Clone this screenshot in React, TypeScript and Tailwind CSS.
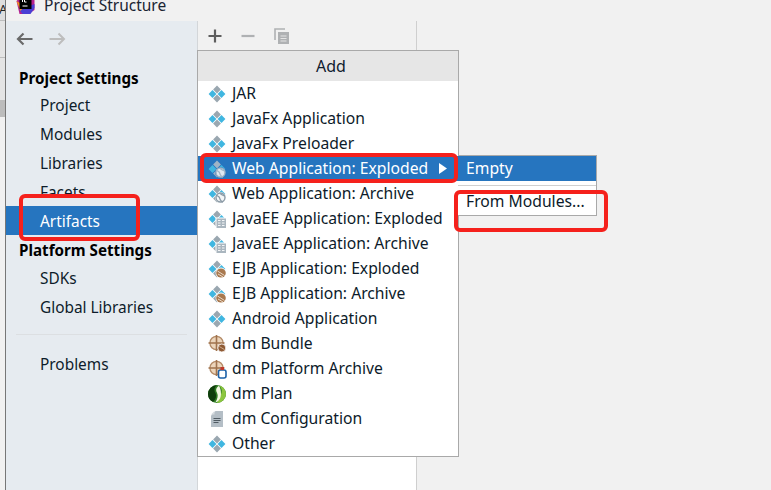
import React from "react";

const font = { fontFamily: '"Noto Sans", sans-serif' };

function Cluster({ tl = "#9aa7b0", l = "#40b6e0", r = "#40b6e0", b = "#9aa7b0" }) {
  return (
    <>
      <path d="M9 .6l3.9 3.9L9 8.4 5.1 4.5z" fill={tl} />
      <path d="M4.5 5.1L8.4 9l-3.9 3.9L.6 9z" fill={l} />
      <path d="M13.5 5.1L17.4 9l-3.9 3.9L9.6 9z" fill={r} />
      <path d="M9 9.6l3.9 3.9L9 17.4l-3.9-3.9z" fill={b} />
    </>
  );
}

function Globe({ light }: { light?: boolean }) {
  const c = light ? "#9fb4c6" : "#8b9aa6";
  return (
    <>
      <circle cx="12.5" cy="12.5" r="5.4" fill={light ? "#2675bf" : "#fff"} />
      <circle cx="12.5" cy="12.5" r="4.5" fill={light ? "#dfe8f0" : "#f4f6f7"} stroke={c} strokeWidth="1.4" />
      <path d="M9 10.5c2 1 3 2 3 3.5s2 2 2.5 3.5M12 8.5c1 1.5 3 1 4.5 2.5" fill="none" stroke={c} strokeWidth="1.3" />
    </>
  );
}

function EE() {
  return (
    <>
      <rect x="7.5" y="7.5" width="11" height="11" fill="#fff" />
      <rect x="8.5" y="8.5" width="9.5" height="9.5" fill="#aab6bf" />
      <path d="M10 10.5h2.5M10 13h2.5M10 15.5h2.5M14 10.5h2.5M14 13h2.5M14 15.5h2.5" stroke="#f4f6f7" strokeWidth="1" />
    </>
  );
}

function Bean() {
  return (
    <>
      <circle cx="13" cy="13" r="5.4" fill="#fff" />
      <ellipse cx="13" cy="13" rx="4.8" ry="4.5" fill="#a9794f" />
      <path d="M9.5 11l7 4.5M10 14l5 3" stroke="#e9d9c8" strokeWidth="1" />
    </>
  );
}

function Target() {
  return (
    <>
      <circle cx="8.5" cy="8" r="6.6" fill="#ecd5bb" stroke="#b38a66" strokeWidth="1.3" />
      <path d="M8.5 0v16M.5 8h16" stroke="#a0734e" strokeWidth="1.6" />
    </>
  );
}

function ItemIcon({ kind }: { kind: string }) {
  let body: React.ReactNode;
  if (kind === "plain") body = <Cluster />;
  if (kind === "webSel")
    body = (
      <>
        <Cluster tl="#9fb4c6" b="#9fb4c6" />
        <Globe light />
      </>
    );
  if (kind === "web")
    body = (
      <>
        <Cluster />
        <Globe />
      </>
    );
  if (kind === "ee")
    body = (
      <>
        <Cluster />
        <EE />
      </>
    );
  if (kind === "ejb")
    body = (
      <>
        <Cluster />
        <Bean />
      </>
    );
  if (kind === "bundle")
    body = (
      <>
        <Target />
        <circle cx="13.8" cy="13" r="4" fill="#8f5a34" stroke="#fff" strokeWidth="0.8" />
        <path d="M11.3 11.5l5 3" stroke="#d8b898" strokeWidth="0.9" />
      </>
    );
  if (kind === "platform")
    body = (
      <>
        <Target />
        <rect x="10.5" y="10" width="7.5" height="8" rx="2" fill="#fff" stroke="#1d62a8" strokeWidth="1.6" />
        <rect x="12.5" y="7" width="3.5" height="3" fill="#c0392b" />
      </>
    );
  if (kind === "plan")
    body = (
      <>
        <circle cx="9" cy="9" r="9" fill="#2f7d23" />
        <path d="M0 9A9 9 0 0 1 9 0C6 3 6 5 7.5 8S8 14 5 17A9 9 0 0 1 0 9z" fill="#0f3d0c" />
        <path d="M18 9A9 9 0 0 0 11 .3c2 2 3.5 4.7 2.5 7.7s-3 5.5-4.5 10A9 9 0 0 0 18 9z" fill="#8cc63f" />
        <path d="M11 .8c-3 2-3.5 4-2 7s.5 6-1.5 9.5c3-.5 5.5-4 5.5-8.3s-1-6.200-2-8.200z" fill="#f2f7e2" />
      </>
    );
  if (kind === "config")
    body = (
      <>
        <path d="M7.500 1h7.500v16H3V5.500z" fill="#b4bec6" />
        <path d="M3 4.500L6.500 1v3.500z" fill="#d6dce0" />
        <path d="M5.500 8.500h7M5.500 10.500h7M5.500 12.500h5" stroke="#4f5a62" strokeWidth="1" />
      </>
    );
  return (
    <svg width="18" height="18" viewBox="0 0 18 18" className="shrink-0 overflow-visible">
      {body}
    </svg>
  );
}

const items: [string, string][] = [
  ["plain", "JAR"],
  ["plain", "JavaFx Application"],
  ["plain", "JavaFx Preloader"],
  ["webSel", "Web Application: Exploded"],
  ["web", "Web Application: Archive"],
  ["ee", "JavaEE Application: Exploded"],
  ["ee", "JavaEE Application: Archive"],
  ["ejb", "EJB Application: Exploded"],
  ["ejb", "EJB Application: Archive"],
  ["plain", "Android Application"],
  ["bundle", "dm Bundle"],
  ["platform", "dm Platform Archive"],
  ["plan", "dm Plan"],
  ["config", "dm Configuration"],
  ["plain", "Other"],
];

function NavItem({ label, active, shift }: { label: string; active?: boolean; shift?: boolean }) {
  return (
    <div className={`h-[29px] flex items-center pl-[34px] text-[15.4px] ${shift ? "pt-[2px]" : ""} ${active ? "bg-[#2675bf] text-white" : "text-[#0d1b2a]"}`}>{label}</div>
  );
}

export default function App() {
  return (
    <div className="relative w-[771px] h-[490px] overflow-hidden flex bg-[#f1f1f1] text-[15px]" style={font}>
      <div className="w-[6px] shrink-0 bg-[#f1f1f1] border-r border-[#777777] flex flex-col overflow-hidden text-[#222]">
        <div className="h-[20px] bg-[#dedede] text-[13px] leading-[18px] -ml-[1px]">A</div>
        <div className="h-[37px] bg-[#e4e4e4] border-t border-[#bdbdbd]" />
        <div className="h-[43px] bg-[#e4e4e4] border-t border-[#bdbdbd]" />
        <div className="h-[17px] bg-[#bcbcbc]" />
        <div className="flex-1 bg-[#f1f1f1]" />
      </div>
      <div className="flex-1 flex flex-col">
        <div className="h-[21px] shrink-0 flex items-start pl-[10px] overflow-hidden">
          <svg width="19" height="18" viewBox="0 0 18 18" className="shrink-0 -mt-[4px]">
            <path d="M0 5L5 0h13v14l-6 4H3z" fill="#b5218e" />
            <path d="M3 14l3 4h8l4-6v-4z" fill="#4a3fd4" />
            <path d="M0 5l4 10 4-5z" fill="#f7931e" />
            <rect x="3" y="0" width="12" height="13" fill="#000" />
            <path d="M6 2v4M8 2v4h2M6 10h5" stroke="#fff" strokeWidth="1" fill="none" />
          </svg>
          <span className="ml-[9px] text-[15.5px] leading-[20px] -mt-[5px] text-[#1a2433]">Project Structure</span>
        </div>
        <div className="flex-1 flex min-h-0">
          <div className="w-[192px] shrink-0 bg-[#e6ebf0] border-r border-[#d3d6d9] flex flex-col">
            <div className="h-[43px] flex items-center pl-[10px] pb-[8px] gap-[16px] shrink-0">
              <svg width="17" height="14" viewBox="0 0 17 14">
                <path d="M16.500 7H2M7.500 1.500L2 7l5.500 5.500" fill="none" stroke="#6a6a6a" strokeWidth="2.200" />
              </svg>
              <svg width="17" height="14" viewBox="0 0 17 14">
                <path d="M.5 7H15M9.500 1.500L15 7l-5.500 5.500" fill="none" stroke="#bdbdbd" strokeWidth="2" />
              </svg>
            </div>
            <div className="h-[26px] flex items-center pl-[13px] pt-[2px] font-bold text-[15.2px] text-black">Project Settings</div>
            <NavItem label="Project" shift />
            <NavItem label="Modules" shift />
            <NavItem label="Libraries" shift />
            <NavItem label="Facets" shift />
            <NavItem label="Artifacts" active shift />
            <div className="h-[28px] flex items-center pl-[13px] pt-[2px] font-bold text-[15.2px] text-black">Platform Settings</div>
            <NavItem label="SDKs" shift />
            <NavItem label="Global Libraries" shift />
            <div className="mx-[10px] mt-[13px] mb-[14px] h-px bg-[#dcdfe2]" />
            <NavItem label="Problems" shift />
          </div>
          <div className="flex-1 flex flex-col min-w-0">
            <div className="h-[29px] shrink-0 flex">
              <div className="w-[219px] shrink-0 border-r border-[#cfcfcf] flex items-center pl-[10px] gap-[19px]">
                <svg width="14" height="14" viewBox="0 0 14 14">
                  <path d="M7 .5v13M.5 7h13" stroke="#5e5e5e" strokeWidth="2.200" />
                </svg>
                <svg width="14" height="14" viewBox="0 0 14 14">
                  <path d="M.5 7h13" stroke="#afb1b3" strokeWidth="2.200" />
                </svg>
                <svg width="16" height="16" viewBox="0 0 16 16">
                  <path d="M1 12V1h10" fill="none" stroke="#afb1b3" strokeWidth="1.600" />
                  <rect x="4" y="4" width="11" height="12" fill="#afb1b3" />
                  <path d="M6.500 8h6M6.500 10.500h6M6.500 13h6" stroke="#e4e4e4" strokeWidth="1" />
                </svg>
              </div>
            </div>
            <div className="flex-1 flex">
              <div className="w-[219px] shrink-0 bg-white border-r border-[#cfcfcf]" />
            </div>
          </div>
        </div>
      </div>

      {/* popup */}
      <div className="absolute left-[197px] top-[50px] w-[262px] h-[407px] bg-white border border-[#a9a9a9]">
        <div className="h-[30px] bg-[#e6e6e6] flex items-center justify-center pl-[6px] text-[16px] text-[#10202f]">Add</div>
        {items.map(([k, label], i) => (
          <div key={label} className={`h-[25px] flex items-center pl-[10px] gap-[6px] text-[15.7px] ${i === 3 ? "bg-[#2675bf] text-white" : "text-[#0d1b2a]"}`}>
            <ItemIcon kind={k} />
            <span className="flex-1 whitespace-nowrap">{label}</span>
            {i === 3 && (
              <svg width="9" height="11" viewBox="0 0 9 11" className="mr-[11px]">
                <path d="M1 0l8 5.500L1 11z" fill="#fff" />
              </svg>
            )}
          </div>
        ))}
      </div>

      {/* submenu */}
      <div className="absolute left-[458px] top-[155px] w-[139px] h-[61px] bg-white border border-[#a9a9a9] border-l-0 text-[#0d1b2a] text-[15.7px]">
        <div className="h-[25px] bg-[#2675bf] text-white flex items-center pl-[8px]">Empty</div>
        <div className="h-[4px]" />
        <div className="h-px bg-[#d0d0d0]" />
        <div className="h-[29px] flex items-center pl-[8px] pt-[3px]">From Modules...</div>
      </div>

      {/* annotations */}
      <div className="absolute left-[19px] top-[194px] w-[121px] h-[47px] border-4 border-[#f5211c] rounded-[6px]" />
      <div className="absolute left-[200px] top-[153px] w-[258px] h-[30px] border-4 border-[#f5211c] rounded-[6px]" />
      <div className="absolute left-[454px] top-[190px] w-[154px] h-[42px] border-4 border-[#f5211c] rounded-[6px]" />
    </div>
  );
}
